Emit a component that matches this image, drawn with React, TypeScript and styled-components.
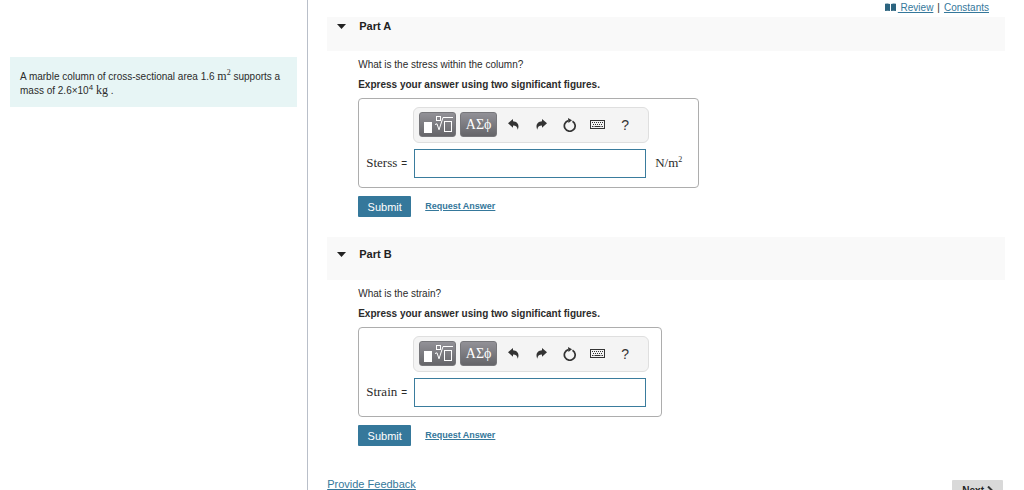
import React from 'react';
import styled, { createGlobalStyle } from 'styled-components';

const GlobalStyle = createGlobalStyle`
  *, *::before, *::after { box-sizing: border-box; }
  html, body { margin: 0; }
  body {
    background: #fff;
    color: #2b2b2b;
    font-family: "Liberation Sans", Arial, sans-serif;
    font-size: 10px;
    line-height: 14px;
  }
  p, h2 { margin: 0; }
  a { color: #35789b; }
  button, input { font: inherit; }
`;

const Page = styled.div`
  display: grid;
  grid-template-columns: 3fr 7fr;
  height: 100vh;
`;

const ProblemPane = styled.aside`
  padding: 57px 10px 10px;
`;

const Statement = styled.p`
  padding: 13px 4px 9px 10px;
  background: #e7f5f5;
`;

const MathText = styled.span<{ $inline?: boolean }>`
  font-family: "Liberation Serif", "Times New Roman", serif;
  font-size: ${({ $inline }) => ($inline ? 12 : 13)}px;
  line-height: 1;
`;

const Sup = styled.sup`
  font-size: 8px;
  line-height: 0;
`;

const WorkPane = styled.main`
  min-width: 0;
  padding: 0 19px;
  border-left: 1px solid #b9bfc9;
  overflow-y: auto;
  scrollbar-width: none;
`;

const HelpNav = styled.nav`
  display: flex;
  justify-content: flex-end;
  align-items: center;
  gap: 4px;
  height: 17px;
  padding: 0 16px 2px 0;
`;

const ReviewLink = styled.a`
  display: flex;
  align-items: center;
  gap: 2px;
  white-space: pre;
`;

const PartHeader = styled.header<{ $tall?: boolean }>`
  display: flex;
  align-items: flex-start;
  height: ${({ $tall }) => ($tall ? 43 : 34)}px;
  padding-top: ${({ $tall }) => ($tall ? 10 : 2)}px;
  background: #f9f9f9;
`;

const Collapse = styled.button`
  display: flex;
  align-items: center;
  gap: 13px;
  padding: 0 0 0 10px;
  border: 0;
  background: none;
  color: #222;
  font-size: 11px;
  font-weight: bold;
  line-height: 14px;
`;

const PartTitle = styled.h2`
  font: inherit;
`;

const PartBody = styled.section`
  padding: 7px 0 20px 31px;
`;

const Instruction = styled.p`
  margin: 6px 0;
  font-weight: bold;
`;

const AnswerBox = styled.div`
  width: fit-content;
  padding: 8px 12px 9px 7px;
  border: 1px solid #adadad;
  border-radius: 4px;
`;

const Toolbar = styled.div`
  display: flex;
  align-items: center;
  width: fit-content;
  height: 36px;
  margin: 0 0 6px 47px;
  padding: 0 9px 1px 5px;
  border: 1px solid #dfdfdf;
  border-radius: 6px;
  background: #f4f4f4;
`;

const PaletteButton = styled.button`
  display: flex;
  align-items: center;
  justify-content: center;
  width: 37px;
  height: 25px;
  padding: 0;
  border: 1px solid #77777b;
  border-radius: 3px;
  background: linear-gradient(#929197, #656569);
  color: #fff;
  font-family: "Liberation Serif", "DejaVu Serif", serif;
  font-size: 14px;
  line-height: 16px;

  & + & {
    margin: 0 2px 0 4px;
  }
`;

const ToolButton = styled.button`
  display: flex;
  align-items: center;
  justify-content: center;
  width: 28px;
  height: 25px;
  padding: 0;
  border: 0;
  background: none;
  color: #333;
  font-size: 14px;
  line-height: 16px;
`;

const AnswerRow = styled.div`
  display: flex;
  align-items: center;
`;

const AnswerLabel = styled.label`
  display: flex;
  justify-content: space-between;
  align-items: baseline;
  width: 41px;
  margin-right: 7px;
  white-space: nowrap;
`;

const AnswerInput = styled.input`
  width: 232px;
  height: 29px;
  padding: 0 6px;
  border: 1px solid #3a7c9d;
  border-radius: 0;
  background: #fff;
  font-size: 12px;
`;

const Unit = styled.span`
  padding: 0 4px 0 9px;
`;

const Actions = styled.div`
  display: flex;
  align-items: center;
  gap: 14px;
  margin-top: 8px;
`;

const SubmitButton = styled.button`
  min-width: 53px;
  height: 21px;
  padding: 0 9px;
  border: 0;
  border-radius: 1px;
  background: #35789b;
  color: #fff;
  font-size: 11px;
`;

const RequestLink = styled.a`
  margin-bottom: 2px;
  font-size: 9px;
  font-weight: bold;
`;

const Footer = styled.footer`
  display: flex;
  align-items: flex-start;
  justify-content: space-between;
  padding: 14px 2px 20px 0;
`;

const FeedbackLink = styled.a`
  margin-top: -3px;
  font-size: 11px;
`;

const NextButton = styled.button`
  display: flex;
  align-items: center;
  gap: 3px;
  height: 21px;
  padding: 0 10px;
  border: 0;
  border-radius: 1px;
  background: #d9d9d9;
  color: #222;
  font-size: 10px;
  font-weight: bold;
`;

const BookIcon = () => (
  <svg width="11" height="9" viewBox="0 0 11 9" aria-hidden="true">
    <path d="M0 .8Q3 .2 5 1v7Q3 7.500 0 8ZM6 1q2-.8 5-.2V8Q8 7.500 6 8Z" fill="#2c647f" />
  </svg>
);

const Caret = () => (
  <svg width="9" height="5" viewBox="0 0 9 5" aria-hidden="true">
    <path d="M0 0h9L4.500 5Z" fill="#222" />
  </svg>
);

const TemplatesIcon = () => (
  <svg width="31" height="19" viewBox="0 0 31 19" fill="none" stroke="#fff" aria-hidden="true">
    <rect x="2" y="7" width="8" height="11" fill="#fff" stroke="none" />
    <rect x="14.500" y="1.500" width="4" height="4" />
    <path d="M13 9.500l2-.7 2 6L21 2.500H31" />
    <rect x="22.500" y="6.500" width="7" height="10" />
  </svg>
);

const UndoIcon = () => (
  <svg width="11" height="11" viewBox="0 0 11 11" aria-hidden="true">
    <path d="M0 4.200 5 0v2.300C9 2.500 12 5.500 9.700 10.800 9.500 8 8 6.500 5 6.500v2.200Z" fill="#333" />
  </svg>
);

const RedoIcon = () => (
  <svg width="11" height="11" viewBox="0 0 11 11" aria-hidden="true">
    <path d="M11 4.200 6 0v2.300C2 2.500-1 5.500 1.300 10.800 1.500 8 3 6.500 6 6.500v2.200Z" fill="#333" />
  </svg>
);

const ResetIcon = () => (
  <svg width="13" height="14" viewBox="0 0 13 14" aria-hidden="true">
    <path d="M9.500 3.200A5.400 5.400 0 1 1 5.500 2.600" fill="none" stroke="#333" strokeWidth="1.700" />
    <path d="M5 0 9 2.300 5.500 5Z" fill="#333" />
  </svg>
);

const KeyboardIcon = () => (
  <svg width="15" height="9" viewBox="0 0 15 9" fill="none" stroke="#333" aria-hidden="true">
    <rect x=".5" y=".5" width="14" height="8" />
    <path d="M2 2.500h11M3 4.500h10" strokeDasharray="1 1" />
    <path d="M2 6.500h1.500M4.500 6.500h6M11.500 6.500H13" />
  </svg>
);

const Chevron = () => (
  <svg width="6" height="9" viewBox="0 0 6 9" aria-hidden="true">
    <path d="M1 .5 5 4.500 1 8.500" fill="none" stroke="#333" strokeWidth="2" />
  </svg>
);

type PartProps = {
  id: string;
  title: string;
  question: string;
  label: string;
  unit?: React.ReactNode;
  tall?: boolean;
};

const Part = ({ id, title, question, label, unit, tall }: PartProps) => (
  <>
    <PartHeader $tall={tall}>
      <Collapse type="button" aria-expanded="true">
        <Caret />
        <PartTitle>{title}</PartTitle>
      </Collapse>
    </PartHeader>
    <PartBody>
      <p>{question}</p>
      <Instruction>Express your answer using two significant figures.</Instruction>
      <AnswerBox>
        <Toolbar role="toolbar" aria-label="Equation tools">
          <PaletteButton type="button" aria-label="Templates"><TemplatesIcon /></PaletteButton>
          <PaletteButton type="button">ΑΣϕ</PaletteButton>
          <ToolButton type="button" aria-label="Undo"><UndoIcon /></ToolButton>
          <ToolButton type="button" aria-label="Redo"><RedoIcon /></ToolButton>
          <ToolButton type="button" aria-label="Reset"><ResetIcon /></ToolButton>
          <ToolButton type="button" aria-label="Keyboard shortcuts"><KeyboardIcon /></ToolButton>
          <ToolButton type="button">?</ToolButton>
        </Toolbar>
        <AnswerRow>
          <AnswerLabel htmlFor={id}>
            <MathText>{label}</MathText>
            <span>=</span>
          </AnswerLabel>
          <AnswerInput id={id} type="text" />
          {unit && <Unit>{unit}</Unit>}
        </AnswerRow>
      </AnswerBox>
      <Actions>
        <SubmitButton type="button">Submit</SubmitButton>
        <RequestLink href="#request">Request Answer</RequestLink>
      </Actions>
    </PartBody>
  </>
);

export default function App() {
  return (
    <>
      <GlobalStyle />
      <Page>
        <ProblemPane>
          <Statement>
            A marble column of cross-sectional area 1.6 <MathText $inline>m<Sup>2</Sup></MathText> supports a
            mass of 2.6×10<Sup>4</Sup> <MathText $inline>kg</MathText> .
          </Statement>
        </ProblemPane>
        <WorkPane>
          <HelpNav>
            <ReviewLink href="#review"><BookIcon /><span> Review</span></ReviewLink>
            <span>|</span>
            <a href="#constants">Constants</a>
          </HelpNav>
          <Part
            id="stress"
            title="Part A"
            question="What is the stress within the column?"
            label="Sterss"
            unit={<MathText>N/m<Sup>2</Sup></MathText>}
          />
          <Part id="strain" title="Part B" question="What is the strain?" label="Strain" tall />
          <Footer>
            <FeedbackLink href="#feedback">Provide Feedback</FeedbackLink>
            <NextButton type="button">Next <Chevron /></NextButton>
          </Footer>
        </WorkPane>
      </Page>
    </>
  );
}
